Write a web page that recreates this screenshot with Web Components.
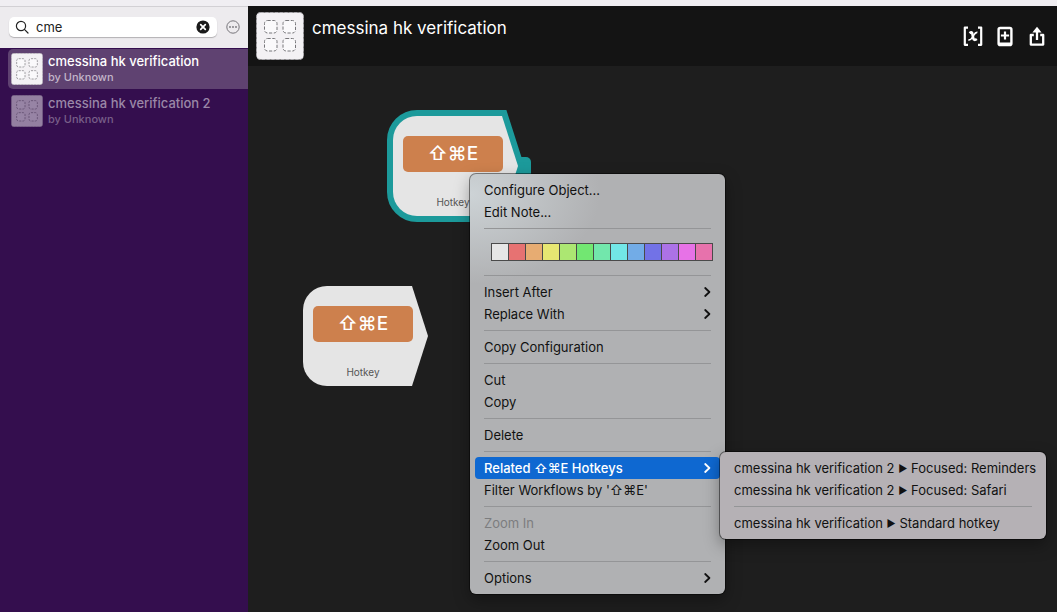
<!DOCTYPE html>
<html lang="en">
<head>
<meta charset="utf-8">
<title>Workflows</title>
<style>
  html, body {
    margin: 0;
    height: 100%;
  }

  body {
    font-family: Inter, "DejaVu Sans", sans-serif;
    font-size: 13px;
    background: #1e1e1e;
    overflow: hidden;
  }
</style>
</head>
<body>
<workflow-app>
  <workflow-sidebar slot="sidebar">
    <search-bar slot="search" value="cme"></search-bar>
    <workflow-row name="cmessina hk verification" author="by Unknown" selected></workflow-row>
    <workflow-row name="cmessina hk verification 2" author="by Unknown" disabled></workflow-row>
  </workflow-sidebar>

  <workflow-header slot="header">cmessina hk verification</workflow-header>

  <workflow-canvas>
    <hotkey-node hotkey="⇧⌘E" style="left: 145px; top: 50px" selected>Hotkey</hotkey-node>
    <hotkey-node hotkey="⇧⌘E" style="left: 55px; top: 220px">Hotkey</hotkey-node>

    <context-menu class="main" style="left: 222px; top: 108px; width: 255px">
      <menu-item>Configure Object...</menu-item>
      <menu-item>Edit Note...</menu-item>
      <menu-separator></menu-separator>
      <color-swatches></color-swatches>
      <menu-separator></menu-separator>
      <menu-item submenu>Insert After</menu-item>
      <menu-item submenu>Replace With</menu-item>
      <menu-separator></menu-separator>
      <menu-item>Copy Configuration</menu-item>
      <menu-separator></menu-separator>
      <menu-item>Cut</menu-item>
      <menu-item>Copy</menu-item>
      <menu-separator></menu-separator>
      <menu-item>Delete</menu-item>
      <menu-separator></menu-separator>
      <menu-item submenu active>Related ⇧⌘E Hotkeys</menu-item>
      <menu-item>Filter Workflows by '⇧⌘E'</menu-item>
      <menu-separator></menu-separator>
      <menu-item disabled>Zoom In</menu-item>
      <menu-item>Zoom Out</menu-item>
      <menu-separator></menu-separator>
      <menu-item submenu>Options</menu-item>
    </context-menu>

    <context-menu class="related" style="left: 472px; top: 386px; width: 326px">
      <menu-item>cmessina hk verification 2 <small>▶</small> Focused: Reminders</menu-item>
      <menu-item>cmessina hk verification 2 <small>▶</small> Focused: Safari</menu-item>
      <menu-separator></menu-separator>
      <menu-item>cmessina hk verification <small>▶</small> Standard hotkey</menu-item>
    </context-menu>
  </workflow-canvas>
</workflow-app>

<script>
/**
 * Window frame: title strip on top, sidebar left, header and canvas right
 * @element workflow-app
 */
class WorkflowApp extends HTMLElement {
  constructor() {
    super();
    this.attachShadow({ mode: 'open' });
    this.shadowRoot.innerHTML = `
      <style>
        :host {
          display: grid;
          grid-template-columns: 248px 1fr;
          grid-template-rows: 6px auto 1fr;
          height: 100vh;
        }

        .strip {
          grid-column: 1 / 3;
          background: #f0eef2;
        }

        aside {
          grid-row: 2 / 4;
          display: flex;
          border-top: 1px solid #d2d0d4;
        }

        main {
          display: flex;
          min-height: 0;
        }

        ::slotted(*) {
          flex: 1;
          min-width: 0;
        }
      </style>
      <div class="strip"></div>
      <aside><slot name="sidebar"></slot></aside>
      <slot name="header"></slot>
      <main><slot></slot></main>
    `;
  }
}

/**
 * @element workflow-sidebar
 */
class WorkflowSidebar extends HTMLElement {
  constructor() {
    super();
    this.attachShadow({ mode: 'open' });
    this.shadowRoot.innerHTML = `
      <style>
        :host {
          display: flex;
          flex-direction: column;
          background: #340e4e;
        }

        .list {
          display: flex;
          flex-direction: column;
          gap: 2px;
          padding: 1px 0 0 8px;
        }
      </style>
      <slot name="search"></slot>
      <div class="list"><slot></slot></div>
    `;
  }
}

/**
 * @element search-bar
 */
class SearchBar extends HTMLElement {
  connectedCallback() {
    this.attachShadow({ mode: 'open' });
    this.shadowRoot.innerHTML = `
      <style>
        :host {
          display: flex;
          align-items: center;
          gap: 9px;
          height: 40px;
          padding: 0 8px 1px 9px;
          background: #edebee;
        }

        .field {
          flex: 1;
          min-width: 0;
          display: flex;
          align-items: center;
          gap: 7px;
          height: 20px;
          padding: 0 7px 0 6px;
          border-radius: 5px;
          background: #fff;
          box-shadow: 0 1px 1px rgba(0, 0, 0, 0.25);
        }

        svg {
          flex: none;
        }

        input {
          flex: 1;
          min-width: 0;
          width: 0;
          padding: 0;
          border: 0;
          outline: 0;
          background: none;
          font: inherit;
          color: #222;
        }

        button {
          display: flex;
          padding: 0;
          border: 0;
          background: none;
        }
      </style>
      <label class="field">
        <svg width="14" height="14" viewBox="0 0 14 14" fill="none" stroke="#222" stroke-width="1.2" stroke-linecap="round">
          <circle cx="6" cy="6" r="4.6"/>
          <path d="M9.4 9.4 13 13"/>
        </svg>
        <input type="text" aria-label="Search workflows" value="${this.getAttribute('value') || ''}">
        <button aria-label="Clear">
          <svg width="14" height="14" viewBox="0 0 14 14">
            <circle cx="7" cy="7" r="6.6" fill="#1a1a1a"/>
            <path d="M4.7 4.7 9.3 9.3M9.3 4.7 4.7 9.3" stroke="#fff" stroke-width="1.7" stroke-linecap="round"/>
          </svg>
        </button>
      </label>
      <button aria-label="Filter">
        <svg width="14" height="14" viewBox="0 0 14 14" fill="#77757a">
          <circle cx="7" cy="7" r="6.2" fill="none" stroke="#77757a"/>
          <circle cx="4" cy="7" r="0.9"/>
          <circle cx="7" cy="7" r="0.9"/>
          <circle cx="10" cy="7" r="0.9"/>
        </svg>
      </button>
    `;
  }
}

/**
 * Placeholder artwork of a workflow
 * @element workflow-icon
 */
class WorkflowIcon extends HTMLElement {
  constructor() {
    super();
    this.attachShadow({ mode: 'open' });
    this.shadowRoot.innerHTML = `
      <style>
        :host {
          display: block;
        }

        svg {
          display: block;
          width: 100%;
          height: 100%;
        }
      </style>
      <svg viewBox="0 0 48 48" fill="none" stroke="#77767a" stroke-width="1" stroke-dasharray="3.2 1.6">
        <rect x="0.5" y="0.5" width="47" height="47" rx="4" fill="#f3f1f4" stroke="#aaa8ad"/>
        <g fill="#faf9fb">
          <rect x="8.5" y="8.5" width="12.5" height="12.5" rx="3"/>
          <rect x="27" y="8.5" width="12.5" height="12.5" rx="3"/>
          <rect x="8.5" y="26.5" width="12.5" height="12.5" rx="3"/>
          <rect x="27" y="26.5" width="12.5" height="12.5" rx="3"/>
        </g>
      </svg>
    `;
  }
}

/**
 * @element workflow-row
 */
class WorkflowRow extends HTMLElement {
  connectedCallback() {
    this.attachShadow({ mode: 'open' });
    this.shadowRoot.innerHTML = `
      <style>
        :host {
          display: flex;
          align-items: center;
          gap: 5px;
          height: 40px;
          padding-left: 3px;
          border-radius: 5px 0 0 5px;
          font-weight: 500;
          line-height: 16px;
          color: #fff;
        }

        :host([selected]) {
          background: #5f4271;
        }

        workflow-icon {
          width: 32px;
          height: 32px;
        }

        .author {
          font-size: 11px;
          color: #c2b5c9;
        }

        :host([disabled]) workflow-icon {
          opacity: 0.5;
        }

        :host([disabled]) .name {
          color: #9a87a7;
        }

        :host([disabled]) .author {
          color: #785f89;
        }
      </style>
      <workflow-icon></workflow-icon>
      <div>
        <div class="name">${this.getAttribute('name')}</div>
        <div class="author">${this.getAttribute('author')}</div>
      </div>
    `;
  }
}

/**
 * @element workflow-header
 */
class WorkflowHeader extends HTMLElement {
  constructor() {
    super();
    this.attachShadow({ mode: 'open' });
    this.shadowRoot.innerHTML = `
      <style>
        :host {
          display: flex;
          gap: 8px;
          height: 48px;
          padding: 6px 9px 6px 8px;
          background: #141414;
          color: #fff;
        }

        workflow-icon {
          width: 48px;
          height: 48px;
        }

        h1 {
          flex: 1;
          margin: 5px 0 0;
          font-size: 17px;
          line-height: 22px;
          font-weight: 400;
        }

        nav {
          display: flex;
          align-items: center;
          gap: 10px;
        }

        button {
          display: flex;
          padding: 0;
          border: 0;
          background: none;
        }
      </style>
      <workflow-icon></workflow-icon>
      <h1><slot></slot></h1>
      <nav>
        <button aria-label="Variables">
          <svg width="22" height="22" viewBox="0 0 22 22" fill="none" stroke="#fff" stroke-width="2.2" stroke-linejoin="round">
            <path d="M6 2.6H2.8V19.8H6M16 2.6H19.2V19.8H16"/>
            <path d="M7.6 8.2C9.4 6.6 10.2 7.4 10.5 9.5L11.2 13C11.6 15.2 13 15.4 14.8 14" stroke-width="2.6"/>
            <path d="M15.4 7.4C13 7 12 10 11 11.5S8.5 15.6 6.4 14.8" stroke-width="1.6"/>
          </svg>
        </button>
        <button aria-label="Add object">
          <svg width="22" height="22" viewBox="0 0 22 22" fill="none" stroke="#fff" stroke-width="2.4">
            <rect x="4.6" y="3" width="12.8" height="17" rx="1.6"/>
            <path d="M11 6.4V14.6M6.9 10.5H15.1M5 18.6H17" stroke-width="2.2"/>
          </svg>
        </button>
        <button aria-label="Share">
          <svg width="22" height="22" viewBox="0 0 22 22" fill="none" stroke="#fff" stroke-width="2.3">
            <path d="M7.8 10H4.8V19.6H17.2V10H14.2M11 15V5" stroke-linejoin="round"/>
            <path d="M6.4 7.4 11 1.8 15.6 7.4Z" fill="#fff" stroke="none"/>
          </svg>
        </button>
      </nav>
    `;
  }
}

/**
 * @element workflow-canvas
 */
class WorkflowCanvas extends HTMLElement {
  constructor() {
    super();
    this.attachShadow({ mode: 'open' });
    this.shadowRoot.innerHTML = `
      <style>
        :host {
          display: block;
          position: relative;
          background: #1e1e1e;
        }

        ::slotted(*) {
          position: absolute;
        }

        ::slotted(.main) {
          --menu-background: radial-gradient(ellipse 130px 90px at 0 20px, #cdd3d6, #b0b1b3) #b0b1b3;
        }

        ::slotted(.related) {
          --menu-background: #b5b1b5;
        }
      </style>
      <slot></slot>
    `;
  }
}

/**
 * Trigger node on the canvas
 * @element hotkey-node
 */
class HotkeyNode extends HTMLElement {
  connectedCallback() {
    const outline = 'M24 0H109L125 50 109 100H24A24 24 0 0 1 0 76V24A24 24 0 0 1 24 0Z';
    const halo = this.hasAttribute('selected') ? `
      <rect x="118" y="41" width="20" height="22" rx="5" fill="#1c9a9b"/>
      <path d="${outline}" fill="none" stroke="#1c9a9b" stroke-width="12"/>` : '';

    this.attachShadow({ mode: 'open' });
    this.shadowRoot.innerHTML = `
      <style>
        :host {
          display: grid;
          width: 125px;
          height: 100px;
        }

        svg, .content {
          grid-area: 1 / 1;
        }

        svg {
          overflow: visible;
        }

        .content {
          z-index: 1;
          display: flex;
          flex-direction: column;
          justify-content: space-between;
          width: 100px;
          padding: 20px 0 6px 10px;
          text-align: center;
        }

        .key {
          border-radius: 5px;
          background: #cd804d;
          color: #fff;
          font-size: 19px;
          font-weight: 500;
          line-height: 36px;
        }

        .label {
          font-size: 10px;
          line-height: 16px;
          color: #555;
        }
      </style>
      <svg width="125" height="100" viewBox="0 0 125 100">
        ${halo}
        <path d="${outline}" fill="#e5e5e5"/>
      </svg>
      <div class="content">
        <div class="key">${this.getAttribute('hotkey')}</div>
        <div class="label"><slot></slot></div>
      </div>
    `;
  }
}

/**
 * @element context-menu
 */
class ContextMenu extends HTMLElement {
  constructor() {
    super();
    this.attachShadow({ mode: 'open' });
    this.shadowRoot.innerHTML = `
      <style>
        :host {
          display: block;
          z-index: 2;
          box-sizing: border-box;
          padding: 5px;
          border-radius: 6px;
          background: var(--menu-background);
          box-shadow: 0 0 0 1px rgba(0, 0, 0, 0.45), 0 6px 16px rgba(0, 0, 0, 0.35);
        }
      </style>
      <div role="menu"><slot></slot></div>
    `;
  }
}

/**
 * @element menu-item
 */
class MenuItem extends HTMLElement {
  connectedCallback() {
    const chevron = this.hasAttribute('submenu') ? `
      <svg width="8" height="10" viewBox="0 0 8 10" fill="none" stroke="currentColor" stroke-width="1.8" stroke-linecap="round" stroke-linejoin="round">
        <path d="M2.2 1 6.4 5 2.2 9"/>
      </svg>` : '';

    this.attachShadow({ mode: 'open' });
    this.shadowRoot.innerHTML = `
      <style>
        :host {
          display: block;
        }

        button {
          display: flex;
          align-items: center;
          justify-content: space-between;
          width: 100%;
          height: 22px;
          padding: 0 9px;
          border: 0;
          border-radius: 4px;
          background: none;
          font: inherit;
          color: #111;
          white-space: nowrap;
        }

        button:disabled {
          color: #7c7d7f;
        }

        :host([active]) button {
          background: #0e68d1;
          color: #fff;
          font-weight: 500;
        }

        ::slotted(small) {
          font-size: 10px;
          vertical-align: 1px;
        }
      </style>
      <button role="menuitem" ${this.hasAttribute('disabled') ? 'disabled' : ''}>
        <span><slot></slot></span>
        ${chevron}
      </button>
    `;
  }
}

/**
 * @element menu-separator
 */
class MenuSeparator extends HTMLElement {
  constructor() {
    super();
    this.attachShadow({ mode: 'open' });
    this.shadowRoot.innerHTML = `
      <style>
        :host {
          display: block;
          padding: 5px 9px;
        }

        hr {
          height: 1px;
          margin: 0;
          border: 0;
          background: #949597;
        }
      </style>
      <hr>
    `;
  }
}

/**
 * @element color-swatches
 */
class ColorSwatches extends HTMLElement {
  constructor() {
    super();
    this.colors = [
      '#e6e6e6', '#e77272', '#e7ac72', '#e7e772', '#ace772', '#72e772', '#72e7ac',
      '#72e7e7', '#72ace7', '#7272e7', '#ac72e7', '#e772e7', '#e772ac'
    ];
    this.attachShadow({ mode: 'open' });
    this.shadowRoot.innerHTML = `
      <style>
        :host {
          display: flex;
          padding: 9px 16px;
        }

        div {
          display: flex;
          gap: 1px;
          padding: 1px;
          background: #4a4a4a;
        }

        button {
          width: 16px;
          height: 16px;
          padding: 0;
          border: 0;
        }
      </style>
      <div>
        ${this.colors.map(color => `<button aria-label="Color ${color}" style="background: ${color}"></button>`).join('')}
      </div>
    `;
  }
}

// Define the new elements
customElements.define('workflow-app', WorkflowApp);
customElements.define('workflow-sidebar', WorkflowSidebar);
customElements.define('search-bar', SearchBar);
customElements.define('workflow-icon', WorkflowIcon);
customElements.define('workflow-row', WorkflowRow);
customElements.define('workflow-header', WorkflowHeader);
customElements.define('workflow-canvas', WorkflowCanvas);
customElements.define('hotkey-node', HotkeyNode);
customElements.define('context-menu', ContextMenu);
customElements.define('menu-item', MenuItem);
customElements.define('menu-separator', MenuSeparator);
customElements.define('color-swatches', ColorSwatches);
</script>
</body>
</html>
